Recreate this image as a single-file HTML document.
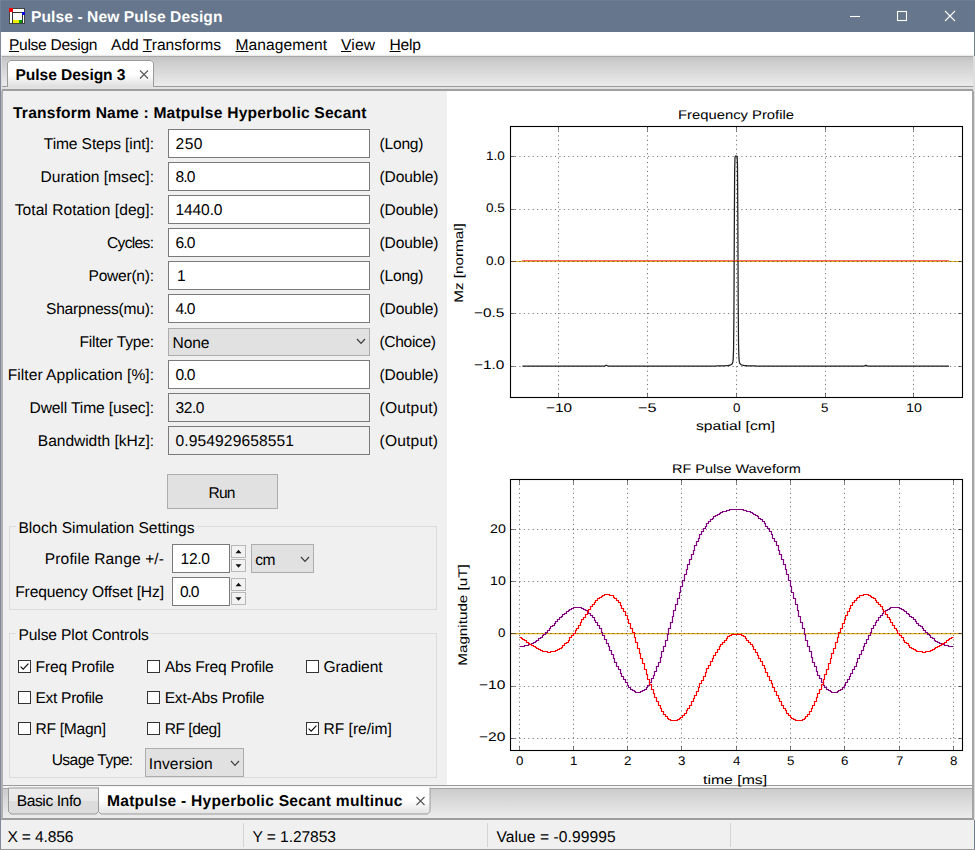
<!DOCTYPE html><html><head><meta charset="utf-8"><title>Pulse - New Pulse Design</title><style>
html,body{margin:0;padding:0;}
body{width:975px;height:850px;overflow:hidden;position:relative;background:#f0f0f0;font-family:'Liberation Sans',sans-serif;text-rendering:geometricPrecision;}
div,svg{position:absolute;box-sizing:border-box;}
.t{white-space:pre;line-height:20px;height:20px;}
.in{background:#fff;border:1px solid #7a7a7a;}
.ro{background:#f0f0f0;border:1px solid #7a7a7a;}
.btn{background:#e1e1e1;border:1px solid #adadad;}
.gb{border:1px solid #dcdcdc;}
.cb{width:13px;height:13px;background:#fff;border:1px solid #333;}
.sp{background:#f2f2f2;border:1px solid #b8b8b8;}
u{text-decoration:underline;text-underline-offset:1px;text-decoration-thickness:1px;}

</style></head><body>
<div style="left:0;top:0;width:975px;height:32px;background:#66768c;"></div>
<div style="left:0;top:0;width:975px;height:1px;background:#6e7e95;"></div>
<div style="left:0;top:0;width:1px;height:32px;background:#728299;"></div>
<svg style="left:9px;top:8px" width="16" height="16" viewBox="0 0 16 16" shape-rendering="crispEdges">
<rect x="0.5" y="0.5" width="15" height="15" fill="#fff" stroke="#444" stroke-width="1"/>
<path d="M3.5 4V16M3.5 4.5H16M13.5 7V16" stroke="#333" stroke-width="1" fill="none"/>
<rect x="0" y="0" width="4" height="4" fill="#f00000"/>
<rect x="13" y="4" width="3" height="3" fill="#0000e0"/>
<rect x="4" y="12.4" width="6" height="3" fill="#f0f000"/>
<rect x="10" y="12.4" width="3" height="3" fill="#00a000"/>
</svg>
<svg style="left:840px;top:0" width="135" height="32" viewBox="0 0 135 32"><g stroke="#fff" stroke-width="1.1" fill="none"><path d="M10 16.5H20"/><rect x="57.5" y="11.5" width="9" height="9"/><path d="M105 11L115 21M115 11L105 21"/></g></svg>
<div style="left:1px;top:32px;width:973px;height:24px;background:#fff;"></div>
<div style="left:1px;top:54px;width:973px;height:2px;background:linear-gradient(#fff,#e4e4e4);"></div>
<div style="left:0;top:32px;width:1px;height:818px;background:#7f8999;"></div>
<div style="left:974px;top:32px;width:1px;height:818px;background:#6f7c91;"></div>
<div style="left:1px;top:56px;width:973px;height:35px;background:#dcdcdc;"></div>
<div style="left:2px;top:56px;width:971px;height:31px;background:linear-gradient(#c2c2c2,#cdcdcd 20%,#ececec 100%);"></div>
<div style="left:2px;top:56px;width:971px;height:1px;background:#a8a8a8;"></div>
<div style="left:2px;top:86px;width:971px;height:1px;background:#9a9a9a;"></div>
<div style="left:2px;top:87px;width:971px;height:2px;background:#e2e2e2;"></div>
<div style="left:2px;top:89px;width:971px;height:2px;background:#9f9f9f;"></div>
<svg style="left:2px;top:58px" width="160" height="30" viewBox="0 0 160 30"><defs><linearGradient id="tg" x1="0" y1="0" x2="0" y2="1"><stop offset="0" stop-color="#fff"/><stop offset="0.55" stop-color="#fdfdfd"/><stop offset="1" stop-color="#dedede"/></linearGradient></defs><path d="M5.5 29V5L8 2.5H149L151.5 5V28.5H160" fill="none"/><path d="M5.5 29V5L8 2.5H149L151.5 5V29Z" fill="url(#tg)"/><path d="M0 28.5H5.5V5L8 2.5H149L151.5 5V28.5" fill="none" stroke="#9a9a9a" stroke-width="1"/><path d="M138 12.5L146 20.5M146 12.5L138 20.5" stroke="#555" stroke-width="1.1" fill="none"/></svg>
<div style="left:1px;top:91px;width:2px;height:728px;background:#b0b0b0;z-index:3;"></div>
<div style="left:972px;top:91px;width:2px;height:728px;background:#a4a4a4;z-index:3;"></div>
<div style="left:973.5px;top:56px;width:0.5px;height:764px;background:#ddd;"></div>
<div style="left:3px;top:91px;width:444px;height:695px;background:#f0f0f0;"></div>
<div class="in" style="left:168px;top:129px;width:202px;height:29px;"></div>
<div class="in" style="left:168px;top:162px;width:202px;height:29px;"></div>
<div class="in" style="left:168px;top:195px;width:202px;height:29px;"></div>
<div class="in" style="left:168px;top:228px;width:202px;height:29px;"></div>
<div class="in" style="left:168px;top:261px;width:202px;height:29px;"></div>
<div class="in" style="left:168px;top:294px;width:202px;height:29px;"></div>
<div class="btn" style="left:168px;top:328px;width:202px;height:28px;"></div>
<svg style="left:356px;top:338.3px" width="10" height="7" viewBox="0 0 10 7"><path d="M1 1L5 5.4L9 1" fill="none" stroke="#3a3a3a" stroke-width="1.15"/></svg>
<div class="in" style="left:168px;top:360px;width:202px;height:29px;"></div>
<div class="ro" style="left:168px;top:393px;width:202px;height:29px;"></div>
<div class="ro" style="left:168px;top:426px;width:202px;height:29px;"></div>
<div class="btn" style="left:167px;top:474px;width:111px;height:35px;"></div>
<div class="gb" style="left:9px;top:526px;width:428px;height:84px;"></div>
<div style="left:16px;top:520px;width:181px;height:14px;background:#f0f0f0;"></div>
<div class="gb" style="left:9px;top:633px;width:428px;height:145px;"></div>
<div style="left:16px;top:627px;width:135px;height:14px;background:#f0f0f0;"></div>
<div class="in" style="left:172px;top:544px;width:58px;height:29px;"></div>
<div class="sp" style="left:231px;top:545px;width:15px;height:13px;"></div><div class="sp" style="left:231px;top:559px;width:15px;height:13px;"></div><svg style="left:231px;top:545px" width="15" height="27" viewBox="0 0 15 27"><path d="M4.5 8.2L7.5 4.8L10.5 8.2Z M4.5 19.3L7.5 22.7L10.5 19.3Z" fill="#111"/></svg>
<div class="btn" style="left:251px;top:544px;width:63px;height:29px;"></div>
<svg style="left:300px;top:555.6px" width="10" height="7" viewBox="0 0 10 7"><path d="M1 1L5 5.4L9 1" fill="none" stroke="#3a3a3a" stroke-width="1.15"/></svg>
<div class="in" style="left:172px;top:577px;width:58px;height:29px;"></div>
<div class="sp" style="left:231px;top:578px;width:15px;height:13px;"></div><div class="sp" style="left:231px;top:592px;width:15px;height:13px;"></div><svg style="left:231px;top:578px" width="15" height="27" viewBox="0 0 15 27"><path d="M4.5 8.2L7.5 4.8L10.5 8.2Z M4.5 19.3L7.5 22.7L10.5 19.3Z" fill="#111"/></svg>
<div class="cb" style="left:18px;top:660px;"></div><svg style="left:18px;top:660px" width="13" height="13" viewBox="0 0 13 13"><path d="M2.6 6.6L5.2 9.2L10.4 3.6" fill="none" stroke="#111" stroke-width="1.2"/></svg>
<div class="cb" style="left:147px;top:660px;"></div>
<div class="cb" style="left:306px;top:660px;"></div>
<div class="cb" style="left:18px;top:691px;"></div>
<div class="cb" style="left:147px;top:691px;"></div>
<div class="cb" style="left:18px;top:722px;"></div>
<div class="cb" style="left:147px;top:722px;"></div>
<div class="cb" style="left:306px;top:722px;"></div><svg style="left:306px;top:722px" width="13" height="13" viewBox="0 0 13 13"><path d="M2.6 6.6L5.2 9.2L10.4 3.6" fill="none" stroke="#111" stroke-width="1.2"/></svg>
<div class="btn" style="left:145px;top:748px;width:99px;height:29px;"></div>
<svg style="left:230px;top:759.5px" width="10" height="7" viewBox="0 0 10 7"><path d="M1 1L5 5.4L9 1" fill="none" stroke="#3a3a3a" stroke-width="1.15"/></svg>
<div style="left:447px;top:91px;width:525px;height:694px;background:#fff;"></div>
<svg style="left:0;top:0" width="975" height="850" viewBox="0 0 975 850">
<path d="M510.5 261.5H962.5" stroke="#e3aa1c" stroke-width="1.1" fill="none"/>
<path d="M558.5 126.5V397.5M647.5 126.5V397.5M736.5 126.5V397.5M825.5 126.5V397.5M913.5 126.5V397.5M510.5 156.5H962.5M510.5 209.5H962.5M510.5 261.5H962.5M510.5 313.5H962.5M510.5 366.5H962.5" stroke="#1a1a1a" stroke-width="0.62" stroke-dasharray="1.11 3.33" fill="none"/><path d="M558.5 397.5v-4.3M558.5 126.5v4.3M647.5 397.5v-4.3M647.5 126.5v4.3M736.5 397.5v-4.3M736.5 126.5v4.3M825.5 397.5v-4.3M825.5 126.5v4.3M913.5 397.5v-4.3M913.5 126.5v4.3M510.5 156.5h4.3M962.5 156.5h-4.3M510.5 209.5h4.3M962.5 209.5h-4.3M510.5 261.5h4.3M962.5 261.5h-4.3M510.5 313.5h4.3M962.5 313.5h-4.3M510.5 366.5h4.3M962.5 366.5h-4.3" stroke="#222" stroke-width="0.62" fill="none"/>
<path d="M522.38 366.10 L522.74 366.10 L523.10 366.10 L523.45 366.10 L523.81 366.10 L524.16 366.10 L524.52 366.10 L524.87 366.10 L525.23 366.10 L525.58 366.10 L525.94 366.10 L526.30 366.10 L526.65 366.10 L527.01 366.10 L527.36 366.10 L527.72 366.10 L528.07 366.10 L528.43 366.10 L528.78 366.10 L529.14 366.10 L529.49 366.10 L529.85 366.10 L530.21 366.10 L530.56 366.10 L530.92 366.10 L531.27 366.10 L531.63 366.10 L531.98 366.10 L532.34 366.10 L532.69 366.10 L533.05 366.10 L533.41 366.10 L533.76 366.10 L534.12 366.10 L534.47 366.10 L534.83 366.10 L535.18 366.10 L535.54 366.10 L535.89 366.10 L536.25 366.10 L536.61 366.10 L536.96 366.10 L537.32 366.10 L537.67 366.10 L538.03 366.10 L538.38 366.10 L538.74 366.10 L539.09 366.10 L539.45 366.10 L539.81 366.10 L540.16 366.10 L540.52 366.10 L540.87 366.10 L541.23 366.10 L541.58 366.10 L541.94 366.10 L542.29 366.10 L542.65 366.10 L543.00 366.10 L543.36 366.10 L543.72 366.10 L544.07 366.10 L544.43 366.10 L544.78 366.10 L545.14 366.10 L545.49 366.10 L545.85 366.10 L546.20 366.10 L546.56 366.10 L546.92 366.10 L547.27 366.10 L547.63 366.10 L547.98 366.10 L548.34 366.10 L548.69 366.10 L549.05 366.10 L549.40 366.10 L549.76 366.10 L550.12 366.10 L550.47 366.10 L550.83 366.10 L551.18 366.10 L551.54 366.10 L551.89 366.10 L552.25 366.10 L552.60 366.10 L552.96 366.10 L553.32 366.10 L553.67 366.10 L554.03 366.10 L554.38 366.10 L554.74 366.10 L555.09 366.10 L555.45 366.10 L555.80 366.10 L556.16 366.10 L556.51 366.10 L556.87 366.10 L557.23 366.10 L557.58 366.10 L557.94 366.10 L558.29 366.10 L558.65 366.10 L559.00 366.10 L559.36 366.10 L559.71 366.10 L560.07 366.10 L560.43 366.10 L560.78 366.10 L561.14 366.10 L561.49 366.10 L561.85 366.10 L562.20 366.10 L562.56 366.10 L562.91 366.10 L563.27 366.10 L563.63 366.10 L563.98 366.10 L564.34 366.10 L564.69 366.10 L565.05 366.10 L565.40 366.10 L565.76 366.10 L566.11 366.10 L566.47 366.10 L566.83 366.10 L567.18 366.10 L567.54 366.10 L567.89 366.10 L568.25 366.10 L568.60 366.10 L568.96 366.10 L569.31 366.10 L569.67 366.10 L570.02 366.10 L570.38 366.10 L570.74 366.10 L571.09 366.10 L571.45 366.10 L571.80 366.10 L572.16 366.10 L572.51 366.10 L572.87 366.10 L573.22 366.10 L573.58 366.10 L573.94 366.10 L574.29 366.10 L574.65 366.10 L575.00 366.10 L575.36 366.10 L575.71 366.10 L576.07 366.10 L576.42 366.10 L576.78 366.10 L577.14 366.10 L577.49 366.10 L577.85 366.10 L578.20 366.10 L578.56 366.10 L578.91 366.10 L579.27 366.10 L579.62 366.10 L579.98 366.10 L580.34 366.10 L580.69 366.10 L581.05 366.10 L581.40 366.10 L581.76 366.10 L582.11 366.10 L582.47 366.10 L582.82 366.10 L583.18 366.10 L583.53 366.10 L583.89 366.10 L584.25 366.10 L584.60 366.10 L584.96 366.10 L585.31 366.10 L585.67 366.10 L586.02 366.10 L586.38 366.10 L586.73 366.10 L587.09 366.10 L587.45 366.10 L587.80 366.10 L588.16 366.10 L588.51 366.10 L588.87 366.10 L589.22 366.10 L589.58 366.10 L589.93 366.10 L590.29 366.10 L590.65 366.10 L591.00 366.10 L591.36 366.10 L591.71 366.10 L592.07 366.10 L592.42 366.10 L592.78 366.10 L593.13 366.10 L593.49 366.10 L593.85 366.10 L594.20 366.10 L594.56 366.10 L594.91 366.10 L595.27 366.10 L595.62 366.10 L595.98 366.10 L596.33 366.10 L596.69 366.10 L597.04 366.10 L597.40 366.10 L597.76 366.10 L598.11 366.10 L598.47 366.10 L598.82 366.10 L599.18 366.10 L599.53 366.10 L599.89 366.10 L600.24 366.10 L600.60 366.10 L600.96 366.10 L601.31 366.10 L601.67 366.10 L602.02 366.10 L602.38 366.10 L602.73 366.10 L603.09 366.10 L603.44 366.10 L603.80 366.09 L604.16 366.08 L604.51 366.05 L604.87 365.96 L605.22 365.80 L605.58 365.57 L605.93 365.35 L606.29 365.26 L606.64 365.34 L607.00 365.55 L607.36 365.78 L607.71 365.95 L608.07 366.04 L608.42 366.08 L608.78 366.09 L609.13 366.10 L609.49 366.10 L609.84 366.10 L610.20 366.10 L610.55 366.10 L610.91 366.10 L611.27 366.10 L611.62 366.10 L611.98 366.10 L612.33 366.10 L612.69 366.10 L613.04 366.10 L613.40 366.10 L613.75 366.10 L614.11 366.10 L614.47 366.10 L614.82 366.10 L615.18 366.10 L615.53 366.10 L615.89 366.10 L616.24 366.10 L616.60 366.10 L616.95 366.10 L617.31 366.10 L617.67 366.10 L618.02 366.10 L618.38 366.10 L618.73 366.10 L619.09 366.10 L619.44 366.10 L619.80 366.10 L620.15 366.10 L620.51 366.10 L620.87 366.10 L621.22 366.10 L621.58 366.10 L621.93 366.10 L622.29 366.10 L622.64 366.10 L623.00 366.10 L623.35 366.10 L623.71 366.10 L624.06 366.10 L624.42 366.10 L624.78 366.10 L625.13 366.10 L625.49 366.10 L625.84 366.10 L626.20 366.10 L626.55 366.10 L626.91 366.10 L627.26 366.10 L627.62 366.10 L627.98 366.10 L628.33 366.10 L628.69 366.10 L629.04 366.10 L629.40 366.10 L629.75 366.10 L630.11 366.10 L630.46 366.10 L630.82 366.10 L631.18 366.10 L631.53 366.10 L631.89 366.10 L632.24 366.10 L632.60 366.10 L632.95 366.10 L633.31 366.10 L633.66 366.10 L634.02 366.10 L634.38 366.10 L634.73 366.10 L635.09 366.10 L635.44 366.10 L635.80 366.10 L636.15 366.10 L636.51 366.10 L636.86 366.10 L637.22 366.10 L637.57 366.10 L637.93 366.10 L638.29 366.10 L638.64 366.10 L639.00 366.10 L639.35 366.10 L639.71 366.10 L640.06 366.10 L640.42 366.10 L640.77 366.10 L641.13 366.10 L641.49 366.10 L641.84 366.10 L642.20 366.10 L642.55 366.10 L642.91 366.10 L643.26 366.10 L643.62 366.10 L643.97 366.10 L644.33 366.10 L644.69 366.10 L645.04 366.09 L645.40 366.09 L645.75 366.09 L646.11 366.09 L646.46 366.09 L646.82 366.09 L647.17 366.09 L647.53 366.09 L647.89 366.09 L648.24 366.09 L648.60 366.09 L648.95 366.09 L649.31 366.09 L649.66 366.09 L650.02 366.09 L650.37 366.09 L650.73 366.09 L651.08 366.09 L651.44 366.09 L651.80 366.09 L652.15 366.09 L652.51 366.09 L652.86 366.09 L653.22 366.09 L653.57 366.09 L653.93 366.09 L654.28 366.09 L654.64 366.09 L655.00 366.09 L655.35 366.09 L655.71 366.09 L656.06 366.09 L656.42 366.09 L656.77 366.09 L657.13 366.09 L657.48 366.09 L657.84 366.09 L658.20 366.09 L658.55 366.09 L658.91 366.09 L659.26 366.09 L659.62 366.09 L659.97 366.09 L660.33 366.09 L660.68 366.09 L661.04 366.09 L661.40 366.09 L661.75 366.09 L662.11 366.09 L662.46 366.09 L662.82 366.09 L663.17 366.09 L663.53 366.09 L663.88 366.09 L664.24 366.09 L664.59 366.09 L664.95 366.09 L665.31 366.09 L665.66 366.09 L666.02 366.09 L666.37 366.09 L666.73 366.09 L667.08 366.09 L667.44 366.09 L667.79 366.09 L668.15 366.09 L668.51 366.09 L668.86 366.09 L669.22 366.09 L669.57 366.09 L669.93 366.09 L670.28 366.09 L670.64 366.09 L670.99 366.09 L671.35 366.09 L671.71 366.09 L672.06 366.09 L672.42 366.09 L672.77 366.09 L673.13 366.09 L673.48 366.09 L673.84 366.09 L674.19 366.09 L674.55 366.09 L674.91 366.09 L675.26 366.09 L675.62 366.09 L675.97 366.09 L676.33 366.09 L676.68 366.09 L677.04 366.09 L677.39 366.09 L677.75 366.09 L678.10 366.09 L678.46 366.09 L678.82 366.09 L679.17 366.09 L679.53 366.09 L679.88 366.09 L680.24 366.09 L680.59 366.09 L680.95 366.09 L681.30 366.09 L681.66 366.09 L682.02 366.09 L682.37 366.09 L682.73 366.09 L683.08 366.09 L683.44 366.09 L683.79 366.08 L684.15 366.08 L684.50 366.08 L684.86 366.08 L685.22 366.08 L685.57 366.08 L685.93 366.08 L686.28 366.08 L686.64 366.08 L686.99 366.08 L687.35 366.08 L687.70 366.08 L688.06 366.08 L688.42 366.08 L688.77 366.08 L689.13 366.08 L689.48 366.08 L689.84 366.08 L690.19 366.08 L690.55 366.08 L690.90 366.08 L691.26 366.08 L691.61 366.08 L691.97 366.08 L692.33 366.08 L692.68 366.08 L693.04 366.08 L693.39 366.08 L693.75 366.08 L694.10 366.08 L694.46 366.08 L694.81 366.08 L695.17 366.08 L695.53 366.07 L695.88 366.07 L696.24 366.07 L696.59 366.07 L696.95 366.07 L697.30 366.07 L697.66 366.07 L698.01 366.07 L698.37 366.07 L698.73 366.07 L699.08 366.07 L699.44 366.07 L699.79 366.07 L700.15 366.07 L700.50 366.07 L700.86 366.07 L701.21 366.07 L701.57 366.07 L701.92 366.06 L702.28 366.06 L702.64 366.06 L702.99 366.06 L703.35 366.06 L703.70 366.06 L704.06 366.06 L704.41 366.06 L704.77 366.06 L705.12 366.06 L705.48 366.06 L705.84 366.05 L706.19 366.05 L706.55 366.05 L706.90 366.05 L707.26 366.05 L707.61 366.05 L707.97 366.05 L708.32 366.05 L708.68 366.05 L709.04 366.04 L709.39 366.04 L709.75 366.04 L710.10 366.04 L710.46 366.04 L710.81 366.04 L711.17 366.03 L711.52 366.03 L711.88 366.03 L712.24 366.03 L712.59 366.03 L712.95 366.02 L713.30 366.02 L713.66 366.02 L714.01 366.02 L714.37 366.01 L714.72 366.01 L715.08 366.01 L715.43 366.00 L715.79 366.00 L716.15 366.00 L716.50 365.99 L716.86 365.99 L717.21 365.98 L717.57 365.98 L717.92 365.98 L718.28 365.97 L718.63 365.97 L718.99 365.96 L719.35 365.95 L719.70 365.95 L720.06 365.94 L720.41 365.93 L720.77 365.93 L721.12 365.92 L721.48 365.91 L721.83 365.90 L722.19 365.89 L722.55 365.88 L722.90 365.87 L723.26 365.85 L723.61 365.84 L723.97 365.83 L724.32 365.81 L724.68 365.79 L725.03 365.77 L725.39 365.75 L725.75 365.73 L726.10 365.70 L726.46 365.67 L726.81 365.64 L727.17 365.60 L727.52 365.56 L727.88 365.52 L728.23 365.47 L728.59 365.41 L728.94 365.34 L729.30 365.27 L729.66 365.18 L730.01 365.08 L730.37 364.96 L730.72 364.82 L731.08 364.65 L731.43 364.44 L731.79 364.16 L732.14 363.77 L732.50 363.14 L732.86 361.91 L733.21 358.85 L733.57 349.31 L733.92 316.74 L734.28 237.56 L734.63 171.91 L734.99 157.31 L735.34 156.13 L735.70 156.10 L736.06 156.10 L736.41 156.10 L736.77 156.11 L737.12 156.65 L737.48 165.12 L737.83 215.64 L738.19 301.23 L738.54 344.43 L738.90 357.41 L739.26 361.40 L739.61 362.91 L739.97 363.64 L740.32 364.07 L740.68 364.37 L741.03 364.60 L741.39 364.78 L741.74 364.93 L742.10 365.05 L742.45 365.16 L742.81 365.25 L743.17 365.33 L743.52 365.39 L743.88 365.45 L744.23 365.51 L744.59 365.55 L744.94 365.59 L745.30 365.63 L745.65 365.66 L746.01 365.69 L746.37 365.72 L746.72 365.74 L747.08 365.77 L747.43 365.79 L747.79 365.80 L748.14 365.82 L748.50 365.84 L748.85 365.85 L749.21 365.86 L749.57 365.88 L749.92 365.89 L750.28 365.90 L750.63 365.91 L750.99 365.92 L751.34 365.92 L751.70 365.93 L752.05 365.94 L752.41 365.95 L752.77 365.95 L753.12 365.96 L753.48 365.96 L753.83 365.97 L754.19 365.97 L754.54 365.98 L754.90 365.98 L755.25 365.99 L755.61 365.99 L755.96 366.00 L756.32 366.00 L756.68 366.00 L757.03 366.01 L757.39 366.01 L757.74 366.01 L758.10 366.01 L758.45 366.02 L758.81 366.02 L759.16 366.02 L759.52 366.02 L759.88 366.03 L760.23 366.03 L760.59 366.03 L760.94 366.03 L761.30 366.04 L761.65 366.04 L762.01 366.04 L762.36 366.04 L762.72 366.04 L763.08 366.04 L763.43 366.04 L763.79 366.05 L764.14 366.05 L764.50 366.05 L764.85 366.05 L765.21 366.05 L765.56 366.05 L765.92 366.05 L766.28 366.05 L766.63 366.06 L766.99 366.06 L767.34 366.06 L767.70 366.06 L768.05 366.06 L768.41 366.06 L768.76 366.06 L769.12 366.06 L769.47 366.06 L769.83 366.06 L770.19 366.06 L770.54 366.07 L770.90 366.07 L771.25 366.07 L771.61 366.07 L771.96 366.07 L772.32 366.07 L772.67 366.07 L773.03 366.07 L773.39 366.07 L773.74 366.07 L774.10 366.07 L774.45 366.07 L774.81 366.07 L775.16 366.07 L775.52 366.07 L775.87 366.07 L776.23 366.07 L776.59 366.07 L776.94 366.08 L777.30 366.08 L777.65 366.08 L778.01 366.08 L778.36 366.08 L778.72 366.08 L779.07 366.08 L779.43 366.08 L779.79 366.08 L780.14 366.08 L780.50 366.08 L780.85 366.08 L781.21 366.08 L781.56 366.08 L781.92 366.08 L782.27 366.08 L782.63 366.08 L782.98 366.08 L783.34 366.08 L783.70 366.08 L784.05 366.08 L784.41 366.08 L784.76 366.08 L785.12 366.08 L785.47 366.08 L785.83 366.08 L786.18 366.08 L786.54 366.08 L786.90 366.08 L787.25 366.08 L787.61 366.08 L787.96 366.08 L788.32 366.08 L788.67 366.09 L789.03 366.09 L789.38 366.09 L789.74 366.09 L790.10 366.09 L790.45 366.09 L790.81 366.09 L791.16 366.09 L791.52 366.09 L791.87 366.09 L792.23 366.09 L792.58 366.09 L792.94 366.09 L793.30 366.09 L793.65 366.09 L794.01 366.09 L794.36 366.09 L794.72 366.09 L795.07 366.09 L795.43 366.09 L795.78 366.09 L796.14 366.09 L796.49 366.09 L796.85 366.09 L797.21 366.09 L797.56 366.09 L797.92 366.09 L798.27 366.09 L798.63 366.09 L798.98 366.09 L799.34 366.09 L799.69 366.09 L800.05 366.09 L800.41 366.09 L800.76 366.09 L801.12 366.09 L801.47 366.09 L801.83 366.09 L802.18 366.09 L802.54 366.09 L802.89 366.09 L803.25 366.09 L803.61 366.09 L803.96 366.09 L804.32 366.09 L804.67 366.09 L805.03 366.09 L805.38 366.09 L805.74 366.09 L806.09 366.09 L806.45 366.09 L806.81 366.09 L807.16 366.09 L807.52 366.09 L807.87 366.09 L808.23 366.09 L808.58 366.09 L808.94 366.09 L809.29 366.09 L809.65 366.09 L810.00 366.09 L810.36 366.09 L810.72 366.09 L811.07 366.09 L811.43 366.09 L811.78 366.09 L812.14 366.09 L812.49 366.09 L812.85 366.09 L813.20 366.09 L813.56 366.09 L813.92 366.09 L814.27 366.09 L814.63 366.09 L814.98 366.09 L815.34 366.09 L815.69 366.09 L816.05 366.09 L816.40 366.09 L816.76 366.09 L817.12 366.09 L817.47 366.09 L817.83 366.09 L818.18 366.09 L818.54 366.09 L818.89 366.09 L819.25 366.09 L819.60 366.09 L819.96 366.09 L820.32 366.09 L820.67 366.09 L821.03 366.09 L821.38 366.09 L821.74 366.09 L822.09 366.09 L822.45 366.09 L822.80 366.09 L823.16 366.09 L823.51 366.09 L823.87 366.09 L824.23 366.09 L824.58 366.09 L824.94 366.09 L825.29 366.09 L825.65 366.09 L826.00 366.09 L826.36 366.09 L826.71 366.09 L827.07 366.09 L827.43 366.10 L827.78 366.10 L828.14 366.10 L828.49 366.10 L828.85 366.10 L829.20 366.10 L829.56 366.10 L829.91 366.10 L830.27 366.10 L830.63 366.10 L830.98 366.10 L831.34 366.10 L831.69 366.10 L832.05 366.10 L832.40 366.10 L832.76 366.10 L833.11 366.10 L833.47 366.10 L833.83 366.10 L834.18 366.10 L834.54 366.10 L834.89 366.10 L835.25 366.10 L835.60 366.10 L835.96 366.10 L836.31 366.10 L836.67 366.10 L837.02 366.10 L837.38 366.10 L837.74 366.10 L838.09 366.10 L838.45 366.10 L838.80 366.10 L839.16 366.10 L839.51 366.10 L839.87 366.10 L840.22 366.10 L840.58 366.10 L840.94 366.10 L841.29 366.10 L841.65 366.10 L842.00 366.10 L842.36 366.10 L842.71 366.10 L843.07 366.10 L843.42 366.10 L843.78 366.10 L844.14 366.10 L844.49 366.10 L844.85 366.10 L845.20 366.10 L845.56 366.10 L845.91 366.10 L846.27 366.10 L846.62 366.10 L846.98 366.10 L847.34 366.10 L847.69 366.10 L848.05 366.10 L848.40 366.10 L848.76 366.10 L849.11 366.10 L849.47 366.10 L849.82 366.10 L850.18 366.10 L850.53 366.10 L850.89 366.10 L851.25 366.10 L851.60 366.10 L851.96 366.10 L852.31 366.10 L852.67 366.10 L853.02 366.10 L853.38 366.10 L853.73 366.10 L854.09 366.10 L854.45 366.10 L854.80 366.10 L855.16 366.10 L855.51 366.10 L855.87 366.10 L856.22 366.10 L856.58 366.10 L856.93 366.10 L857.29 366.10 L857.65 366.10 L858.00 366.10 L858.36 366.10 L858.71 366.10 L859.07 366.10 L859.42 366.10 L859.78 366.10 L860.13 366.10 L860.49 366.10 L860.85 366.10 L861.20 366.10 L861.56 366.10 L861.91 366.10 L862.27 366.10 L862.62 366.10 L862.98 366.10 L863.33 366.09 L863.69 366.09 L864.04 366.06 L864.40 365.98 L864.76 365.83 L865.11 365.61 L865.47 365.38 L865.82 365.26 L866.18 365.32 L866.53 365.51 L866.89 365.75 L867.24 365.93 L867.60 366.03 L867.96 366.08 L868.31 366.09 L868.67 366.10 L869.02 366.10 L869.38 366.10 L869.73 366.10 L870.09 366.10 L870.44 366.10 L870.80 366.10 L871.16 366.10 L871.51 366.10 L871.87 366.10 L872.22 366.10 L872.58 366.10 L872.93 366.10 L873.29 366.10 L873.64 366.10 L874.00 366.10 L874.36 366.10 L874.71 366.10 L875.07 366.10 L875.42 366.10 L875.78 366.10 L876.13 366.10 L876.49 366.10 L876.84 366.10 L877.20 366.10 L877.55 366.10 L877.91 366.10 L878.27 366.10 L878.62 366.10 L878.98 366.10 L879.33 366.10 L879.69 366.10 L880.04 366.10 L880.40 366.10 L880.75 366.10 L881.11 366.10 L881.47 366.10 L881.82 366.10 L882.18 366.10 L882.53 366.10 L882.89 366.10 L883.24 366.10 L883.60 366.10 L883.95 366.10 L884.31 366.10 L884.67 366.10 L885.02 366.10 L885.38 366.10 L885.73 366.10 L886.09 366.10 L886.44 366.10 L886.80 366.10 L887.15 366.10 L887.51 366.10 L887.87 366.10 L888.22 366.10 L888.58 366.10 L888.93 366.10 L889.29 366.10 L889.64 366.10 L890.00 366.10 L890.35 366.10 L890.71 366.10 L891.06 366.10 L891.42 366.10 L891.78 366.10 L892.13 366.10 L892.49 366.10 L892.84 366.10 L893.20 366.10 L893.55 366.10 L893.91 366.10 L894.26 366.10 L894.62 366.10 L894.98 366.10 L895.33 366.10 L895.69 366.10 L896.04 366.10 L896.40 366.10 L896.75 366.10 L897.11 366.10 L897.46 366.10 L897.82 366.10 L898.18 366.10 L898.53 366.10 L898.89 366.10 L899.24 366.10 L899.60 366.10 L899.95 366.10 L900.31 366.10 L900.66 366.10 L901.02 366.10 L901.38 366.10 L901.73 366.10 L902.09 366.10 L902.44 366.10 L902.80 366.10 L903.15 366.10 L903.51 366.10 L903.86 366.10 L904.22 366.10 L904.57 366.10 L904.93 366.10 L905.29 366.10 L905.64 366.10 L906.00 366.10 L906.35 366.10 L906.71 366.10 L907.06 366.10 L907.42 366.10 L907.77 366.10 L908.13 366.10 L908.49 366.10 L908.84 366.10 L909.20 366.10 L909.55 366.10 L909.91 366.10 L910.26 366.10 L910.62 366.10 L910.97 366.10 L911.33 366.10 L911.69 366.10 L912.04 366.10 L912.40 366.10 L912.75 366.10 L913.11 366.10 L913.46 366.10 L913.82 366.10 L914.17 366.10 L914.53 366.10 L914.89 366.10 L915.24 366.10 L915.60 366.10 L915.95 366.10 L916.31 366.10 L916.66 366.10 L917.02 366.10 L917.37 366.10 L917.73 366.10 L918.08 366.10 L918.44 366.10 L918.80 366.10 L919.15 366.10 L919.51 366.10 L919.86 366.10 L920.22 366.10 L920.57 366.10 L920.93 366.10 L921.28 366.10 L921.64 366.10 L922.00 366.10 L922.35 366.10 L922.71 366.10 L923.06 366.10 L923.42 366.10 L923.77 366.10 L924.13 366.10 L924.48 366.10 L924.84 366.10 L925.20 366.10 L925.55 366.10 L925.91 366.10 L926.26 366.10 L926.62 366.10 L926.97 366.10 L927.33 366.10 L927.68 366.10 L928.04 366.10 L928.39 366.10 L928.75 366.10 L929.11 366.10 L929.46 366.10 L929.82 366.10 L930.17 366.10 L930.53 366.10 L930.88 366.10 L931.24 366.10 L931.59 366.10 L931.95 366.10 L932.31 366.10 L932.66 366.10 L933.02 366.10 L933.37 366.10 L933.73 366.10 L934.08 366.10 L934.44 366.10 L934.79 366.10 L935.15 366.10 L935.51 366.10 L935.86 366.10 L936.22 366.10 L936.57 366.10 L936.93 366.10 L937.28 366.10 L937.64 366.10 L937.99 366.10 L938.35 366.10 L938.71 366.10 L939.06 366.10 L939.42 366.10 L939.77 366.10 L940.13 366.10 L940.48 366.10 L940.84 366.10 L941.19 366.10 L941.55 366.10 L941.90 366.10 L942.26 366.10 L942.62 366.10 L942.97 366.10 L943.33 366.10 L943.68 366.10 L944.04 366.10 L944.39 366.10 L944.75 366.10 L945.10 366.10 L945.46 366.10 L945.82 366.10 L946.17 366.10 L946.53 366.10 L946.88 366.10 L947.24 366.10 L947.59 366.10 L947.95 366.10 L948.30 366.10 L948.66 366.10 L949.02 366.10" stroke="#1e1e1e" stroke-width="1.25" fill="none" stroke-linejoin="round"/>
<path d="M522.1 260.5H949.15" stroke="#ff3030" stroke-width="1" stroke-opacity="0.72" fill="none"/>
<rect x="510.5" y="126.5" width="452.0" height="271.0" fill="none" stroke="#000" stroke-width="1.1"/>
<path d="M510.5 633.6H962.5" stroke="#e3aa1c" stroke-width="1.1" fill="none"/>
<path d="M519.5 479.5V750.5M573.5 479.5V750.5M627.5 479.5V750.5M681.5 479.5V750.5M736.5 479.5V750.5M790.5 479.5V750.5M844.5 479.5V750.5M899.5 479.5V750.5M953.5 479.5V750.5M510.5 529.5H962.5M510.5 581.5H962.5M510.5 633.5H962.5M510.5 686.5H962.5M510.5 738.5H962.5" stroke="#1a1a1a" stroke-width="0.62" stroke-dasharray="1.11 3.33" fill="none"/><path d="M519.5 750.5v-4.3M519.5 479.5v4.3M573.5 750.5v-4.3M573.5 479.5v4.3M627.5 750.5v-4.3M627.5 479.5v4.3M681.5 750.5v-4.3M681.5 479.5v4.3M736.5 750.5v-4.3M736.5 479.5v4.3M790.5 750.5v-4.3M790.5 479.5v4.3M844.5 750.5v-4.3M844.5 479.5v4.3M899.5 750.5v-4.3M899.5 479.5v4.3M953.5 750.5v-4.3M953.5 479.5v4.3M510.5 529.5h4.3M962.5 529.5h-4.3M510.5 581.5h4.3M962.5 581.5h-4.3M510.5 633.5h4.3M962.5 633.5h-4.3M510.5 686.5h4.3M962.5 686.5h-4.3M510.5 738.5h4.3M962.5 738.5h-4.3" stroke="#222" stroke-width="0.62" fill="none"/>
<path d="M519.5 646.5H521.5V646.5H522.5V646.5H524.5V645.5H526.5V645.5H528.5V644.5H529.5V644.5H531.5V643.5H533.5V642.5H535.5V641.5H536.5V640.5H538.5V638.5H540.5V637.5H542.5V635.5H543.5V634.5H545.5V632.5H547.5V630.5H549.5V628.5H550.5V626.5H552.5V625.5H554.5V623.5H555.5V621.5H557.5V619.5H559.5V617.5H561.5V616.5H562.5V614.5H564.5V613.5H566.5V611.5H568.5V610.5H569.5V609.5H571.5V608.5H573.5V607.5H575.5V607.5H576.5V607.5H578.5V607.5H580.5V607.5H581.5V608.5H583.5V609.5H585.5V610.5H587.5V611.5H588.5V613.5H590.5V615.5H592.5V617.5H594.5V620.5H595.5V622.5H597.5V625.5H599.5V628.5H601.5V632.5H602.5V635.5H604.5V639.5H606.5V643.5H608.5V646.5H609.5V650.5H611.5V654.5H613.5V658.5H614.5V662.5H616.5V666.5H618.5V669.5H620.5V673.5H621.5V676.5H623.5V679.5H625.5V682.5H627.5V685.5H628.5V687.5H630.5V689.5H632.5V690.5H634.5V691.5H635.5V692.5H637.5V692.5H639.5V692.5H640.5V691.5H642.5V690.5H644.5V689.5H646.5V687.5H647.5V685.5H649.5V682.5H651.5V678.5H653.5V675.5H654.5V671.5H656.5V666.5H658.5V662.5H660.5V657.5H661.5V651.5H663.5V646.5H665.5V640.5H667.5V634.5H668.5V628.5H670.5V622.5H672.5V616.5H673.5V610.5H675.5V604.5H677.5V598.5H679.5V592.5H680.5V586.5H682.5V580.5H684.5V574.5H686.5V569.5H687.5V564.5H689.5V559.5H691.5V554.5H693.5V550.5H694.5V545.5H696.5V541.5H698.5V538.5H699.5V534.5H701.5V531.5H703.5V528.5H705.5V526.5H706.5V523.5H708.5V521.5H710.5V519.5H712.5V518.5H713.5V516.5H715.5V515.5H717.5V514.5H719.5V513.5H720.5V512.5H722.5V511.5H724.5V511.5H726.5V510.5H727.5V510.5H729.5V509.5H731.5V509.5H732.5V509.5H734.5V509.5H736.5V509.5H738.5V509.5H739.5V509.5H741.5V509.5H743.5V510.5H745.5V510.5H746.5V511.5H748.5V511.5H750.5V512.5H752.5V513.5H753.5V514.5H755.5V515.5H757.5V516.5H758.5V518.5H760.5V519.5H762.5V521.5H764.5V523.5H765.5V526.5H767.5V528.5H769.5V531.5H771.5V534.5H772.5V538.5H774.5V541.5H776.5V545.5H778.5V550.5H779.5V554.5H781.5V559.5H783.5V564.5H785.5V569.5H786.5V574.5H788.5V580.5H790.5V586.5H791.5V592.5H793.5V598.5H795.5V604.5H797.5V610.5H798.5V616.5H800.5V622.5H802.5V628.5H804.5V634.5H805.5V640.5H807.5V646.5H809.5V651.5H811.5V657.5H812.5V662.5H814.5V666.5H816.5V671.5H817.5V675.5H819.5V678.5H821.5V682.5H823.5V685.5H824.5V687.5H826.5V689.5H828.5V690.5H830.5V691.5H831.5V692.5H833.5V692.5H835.5V692.5H837.5V691.5H838.5V690.5H840.5V689.5H842.5V687.5H844.5V685.5H845.5V682.5H847.5V679.5H849.5V676.5H850.5V673.5H852.5V669.5H854.5V666.5H856.5V662.5H857.5V658.5H859.5V654.5H861.5V650.5H863.5V646.5H864.5V643.5H866.5V639.5H868.5V635.5H870.5V632.5H871.5V628.5H873.5V625.5H875.5V622.5H876.5V620.5H878.5V617.5H880.5V615.5H882.5V613.5H883.5V611.5H885.5V610.5H887.5V609.5H889.5V608.5H890.5V607.5H892.5V607.5H894.5V607.5H896.5V607.5H897.5V607.5H899.5V608.5H901.5V609.5H903.5V610.5H904.5V611.5H906.5V613.5H908.5V614.5H909.5V616.5H911.5V617.5H913.5V619.5H915.5V621.5H916.5V623.5H918.5V625.5H920.5V626.5H922.5V628.5H923.5V630.5H925.5V632.5H927.5V634.5H929.5V635.5H930.5V637.5H932.5V638.5H934.5V640.5H935.5V641.5H937.5V642.5H939.5V643.5H941.5V644.5H942.5V644.5H944.5V645.5H946.5V645.5H948.5V646.5H949.5V646.5H951.5V646.5H953.5" stroke="#800080" stroke-width="1.2" fill="none" stroke-linejoin="miter"/>
<path d="M519.5 637.5H521.5V638.5H522.5V639.5H524.5V640.5H526.5V642.5H528.5V643.5H529.5V644.5H531.5V645.5H533.5V646.5H535.5V647.5H536.5V648.5H538.5V649.5H540.5V650.5H542.5V651.5H543.5V651.5H545.5V651.5H547.5V652.5H549.5V652.5H550.5V651.5H552.5V651.5H554.5V651.5H555.5V650.5H557.5V649.5H559.5V648.5H561.5V647.5H562.5V645.5H564.5V643.5H566.5V642.5H568.5V640.5H569.5V637.5H571.5V635.5H573.5V633.5H575.5V630.5H576.5V628.5H578.5V625.5H580.5V622.5H581.5V619.5H583.5V617.5H585.5V614.5H587.5V611.5H588.5V609.5H590.5V606.5H592.5V604.5H594.5V602.5H595.5V600.5H597.5V598.5H599.5V597.5H601.5V596.5H602.5V595.5H604.5V594.5H606.5V594.5H608.5V594.5H609.5V595.5H611.5V595.5H613.5V597.5H614.5V598.5H616.5V600.5H618.5V602.5H620.5V605.5H621.5V608.5H623.5V611.5H625.5V615.5H627.5V619.5H628.5V623.5H630.5V628.5H632.5V632.5H634.5V637.5H635.5V642.5H637.5V648.5H639.5V653.5H640.5V658.5H642.5V663.5H644.5V669.5H646.5V674.5H647.5V679.5H649.5V684.5H651.5V689.5H653.5V693.5H654.5V697.5H656.5V701.5H658.5V705.5H660.5V708.5H661.5V711.5H663.5V714.5H665.5V716.5H667.5V718.5H668.5V719.5H670.5V720.5H672.5V720.5H673.5V720.5H675.5V720.5H677.5V719.5H679.5V718.5H680.5V717.5H682.5V715.5H684.5V713.5H686.5V710.5H687.5V708.5H689.5V705.5H691.5V701.5H693.5V698.5H694.5V695.5H696.5V691.5H698.5V687.5H699.5V683.5H701.5V680.5H703.5V676.5H705.5V672.5H706.5V668.5H708.5V665.5H710.5V661.5H712.5V658.5H713.5V655.5H715.5V652.5H717.5V649.5H719.5V646.5H720.5V644.5H722.5V642.5H724.5V640.5H726.5V638.5H727.5V636.5H729.5V635.5H731.5V634.5H732.5V634.5H734.5V634.5H736.5V634.5H738.5V634.5H739.5V634.5H741.5V635.5H743.5V636.5H745.5V638.5H746.5V640.5H748.5V642.5H750.5V644.5H752.5V646.5H753.5V649.5H755.5V652.5H757.5V655.5H758.5V658.5H760.5V661.5H762.5V665.5H764.5V668.5H765.5V672.5H767.5V676.5H769.5V680.5H771.5V683.5H772.5V687.5H774.5V691.5H776.5V695.5H778.5V698.5H779.5V701.5H781.5V705.5H783.5V708.5H785.5V710.5H786.5V713.5H788.5V715.5H790.5V717.5H791.5V718.5H793.5V719.5H795.5V720.5H797.5V720.5H798.5V720.5H800.5V720.5H802.5V719.5H804.5V718.5H805.5V716.5H807.5V714.5H809.5V711.5H811.5V708.5H812.5V705.5H814.5V701.5H816.5V697.5H817.5V693.5H819.5V689.5H821.5V684.5H823.5V679.5H824.5V674.5H826.5V669.5H828.5V663.5H830.5V658.5H831.5V653.5H833.5V648.5H835.5V642.5H837.5V637.5H838.5V632.5H840.5V628.5H842.5V623.5H844.5V619.5H845.5V615.5H847.5V611.5H849.5V608.5H850.5V605.5H852.5V602.5H854.5V600.5H856.5V598.5H857.5V597.5H859.5V595.5H861.5V595.5H863.5V594.5H864.5V594.5H866.5V594.5H868.5V595.5H870.5V596.5H871.5V597.5H873.5V598.5H875.5V600.5H876.5V602.5H878.5V604.5H880.5V606.5H882.5V609.5H883.5V611.5H885.5V614.5H887.5V617.5H889.5V619.5H890.5V622.5H892.5V625.5H894.5V628.5H896.5V630.5H897.5V633.5H899.5V635.5H901.5V637.5H903.5V640.5H904.5V642.5H906.5V643.5H908.5V645.5H909.5V647.5H911.5V648.5H913.5V649.5H915.5V650.5H916.5V651.5H918.5V651.5H920.5V651.5H922.5V652.5H923.5V652.5H925.5V651.5H927.5V651.5H929.5V651.5H930.5V650.5H932.5V649.5H934.5V648.5H935.5V647.5H937.5V646.5H939.5V645.5H941.5V644.5H942.5V643.5H944.5V642.5H946.5V640.5H948.5V639.5H949.5V638.5H951.5V637.5H953.5" stroke="#ff0000" stroke-width="1.2" fill="none" stroke-linejoin="miter"/>
<rect x="510.5" y="479.5" width="452.0" height="271.0" fill="none" stroke="#000" stroke-width="1.1"/>
</svg>
<div style="left:1px;top:785px;width:973px;height:35px;background:#dcdcdc;"></div>
<div style="left:3px;top:785px;width:970px;height:1px;background:#9a9a9a;"></div>
<div style="left:3px;top:786px;width:970px;height:2px;background:#f4f4f4;"></div>
<div style="left:3px;top:788px;width:970px;height:30px;background:linear-gradient(#cbcbcb,#ececec);"></div>
<div style="left:3px;top:787.5px;width:970px;height:1px;background:#a4a4a4;"></div>
<div style="left:1px;top:818px;width:973px;height:2px;background:#9d9d9d;"></div>
<svg style="left:3px;top:787px" width="440" height="31" viewBox="0 0 440 31"><defs><linearGradient id="bg1" x1="0" y1="0" x2="0" y2="1"><stop offset="0" stop-color="#ececec"/><stop offset="0.5" stop-color="#e8e8e8"/><stop offset="0.5" stop-color="#dcdcdc"/><stop offset="1" stop-color="#dcdcdc"/></linearGradient><linearGradient id="bg2" x1="0" y1="0" x2="0" y2="1"><stop offset="0" stop-color="#fff"/><stop offset="0.5" stop-color="#fff"/><stop offset="1" stop-color="#e2e2e2"/></linearGradient></defs><path d="M5.5 1V24.5L8 27H93L95.5 24.5V1Z" fill="url(#bg1)" stroke="#9a9a9a"/><path d="M95.5 0V24.5L98 27H424.5L427 24.5V0Z" fill="url(#bg2)"/><path d="M95.5 0.5V24.5L98 27H424.5L427 24.5V0.5" fill="none" stroke="#9a9a9a"/><path d="M413.5 10L421.5 18M421.5 10L413.5 18" stroke="#555" stroke-width="1.1" fill="none"/></svg>
<div style="left:1px;top:820px;width:973px;height:29px;background:#f0f0f0;"></div>
<div style="left:243px;top:823px;width:1px;height:24px;background:#d4d4d4;"></div>
<div style="left:487px;top:823px;width:1px;height:24px;background:#d4d4d4;"></div>
<div style="left:730px;top:823px;width:1px;height:24px;background:#d4d4d4;"></div>
<div style="left:0px;top:848.5px;width:975px;height:1.5px;background:#9a9a9a;"></div>
<div id="texts" style="left:0;top:0;width:975px;height:850px;">
<div class="t" style="left:31.00px;top:8.00px;font-size:15.6px;color:#fff;font-weight:bold;letter-spacing:0.074px;">Pulse - New Pulse Design</div>
<div class="t" style="left:9.00px;top:36.00px;font-size:15.6px;color:#000;letter-spacing:-0.308px;"><u>P</u>ulse Design</div>
<div class="t" style="left:111.00px;top:36.00px;font-size:15.6px;color:#000;letter-spacing:-0.006px;">Add <u>T</u>ransforms</div>
<div class="t" style="left:235.50px;top:36.00px;font-size:15.6px;color:#000;letter-spacing:0.052px;"><u>M</u>anagement</div>
<div class="t" style="left:341.00px;top:36.00px;font-size:15.6px;color:#000;letter-spacing:0.156px;"><u>V</u>iew</div>
<div class="t" style="left:389.50px;top:36.00px;font-size:15.6px;color:#000;letter-spacing:-0.193px;"><u>H</u>elp</div>
<div class="t" style="left:15.50px;top:66.00px;font-size:15.6px;color:#000;font-weight:bold;letter-spacing:-0.072px;">Pulse Design 3</div>
<div class="t" style="left:13.00px;top:104.00px;font-size:15.6px;color:#000;font-weight:bold;letter-spacing:0.205px;">Transform Name : Matpulse Hyperbolic Secant</div>
<div class="t" style="left:43.80px;top:135.00px;font-size:15.6px;color:#000;letter-spacing:-0.118px;">Time Steps [int]:</div>
<div class="t" style="left:175.50px;top:135.00px;font-size:15.6px;color:#000;letter-spacing:0.484px;">250</div>
<div class="t" style="left:379.50px;top:135.00px;font-size:15.6px;color:#000;letter-spacing:-0.216px;">(Long)</div>
<div class="t" style="left:40.60px;top:168.00px;font-size:15.6px;color:#000;letter-spacing:-0.009px;">Duration [msec]:</div>
<div class="t" style="left:175.50px;top:168.00px;font-size:15.6px;color:#000;letter-spacing:-0.844px;">8.0</div>
<div class="t" style="left:379.50px;top:168.00px;font-size:15.6px;color:#000;letter-spacing:-0.116px;">(Double)</div>
<div class="t" style="left:14.80px;top:201.00px;font-size:15.6px;color:#000;letter-spacing:0.025px;">Total Rotation [deg]:</div>
<div class="t" style="left:175.50px;top:201.00px;font-size:15.6px;color:#000;letter-spacing:-0.141px;">1440.0</div>
<div class="t" style="left:379.50px;top:201.00px;font-size:15.6px;color:#000;letter-spacing:-0.116px;">(Double)</div>
<div class="t" style="left:107.00px;top:234.00px;font-size:15.6px;color:#000;letter-spacing:-0.688px;">Cycles:</div>
<div class="t" style="left:175.50px;top:234.00px;font-size:15.6px;color:#000;letter-spacing:-0.844px;">6.0</div>
<div class="t" style="left:379.50px;top:234.00px;font-size:15.6px;color:#000;letter-spacing:-0.116px;">(Double)</div>
<div class="t" style="left:88.60px;top:267.00px;font-size:15.6px;color:#000;letter-spacing:-0.274px;">Power(n):</div>
<div class="t" style="left:177.00px;top:267.00px;font-size:15.6px;color:#000;letter-spacing:0.000px;">1</div>
<div class="t" style="left:379.50px;top:267.00px;font-size:15.6px;color:#000;letter-spacing:-0.216px;">(Long)</div>
<div class="t" style="left:46.00px;top:300.00px;font-size:15.6px;color:#000;letter-spacing:-0.226px;">Sharpness(mu):</div>
<div class="t" style="left:175.50px;top:300.00px;font-size:15.6px;color:#000;letter-spacing:-0.844px;">4.0</div>
<div class="t" style="left:379.50px;top:300.00px;font-size:15.6px;color:#000;letter-spacing:-0.116px;">(Double)</div>
<div class="t" style="left:79.40px;top:333.00px;font-size:15.6px;color:#000;letter-spacing:-0.204px;">Filter Type:</div>
<div class="t" style="left:379.50px;top:333.00px;font-size:15.6px;color:#000;letter-spacing:-0.348px;">(Choice)</div>
<div class="t" style="left:7.80px;top:366.00px;font-size:15.6px;color:#000;letter-spacing:0.027px;">Filter Application [%]:</div>
<div class="t" style="left:175.50px;top:366.00px;font-size:15.6px;color:#000;letter-spacing:-0.844px;">0.0</div>
<div class="t" style="left:379.50px;top:366.00px;font-size:15.6px;color:#000;letter-spacing:-0.116px;">(Double)</div>
<div class="t" style="left:29.50px;top:399.00px;font-size:15.6px;color:#000;letter-spacing:-0.119px;">Dwell Time [usec]:</div>
<div class="t" style="left:175.50px;top:399.00px;font-size:15.6px;color:#000;letter-spacing:-0.453px;">32.0</div>
<div class="t" style="left:379.50px;top:399.00px;font-size:15.6px;color:#000;letter-spacing:0.185px;">(Output)</div>
<div class="t" style="left:37.80px;top:432.00px;font-size:15.6px;color:#000;letter-spacing:-0.054px;">Bandwidth [kHz]:</div>
<div class="t" style="left:175.50px;top:432.00px;font-size:15.6px;color:#000;letter-spacing:0.109px;">0.954929658551</div>
<div class="t" style="left:379.50px;top:432.00px;font-size:15.6px;color:#000;letter-spacing:0.185px;">(Output)</div>
<div class="t" style="left:172.50px;top:334.00px;font-size:15.6px;color:#000;letter-spacing:-0.094px;">None</div>
<div class="t" style="left:208.50px;top:484.00px;font-size:15.6px;color:#000;letter-spacing:-0.805px;">Run</div>
<div class="t" style="left:18.50px;top:519.00px;font-size:15.6px;color:#000;letter-spacing:-0.035px;">Bloch Simulation Settings</div>
<div class="t" style="left:44.80px;top:550.00px;font-size:15.6px;color:#000;letter-spacing:0.109px;">Profile Range +/-</div>
<div class="t" style="left:15.20px;top:583.00px;font-size:15.6px;color:#000;letter-spacing:-0.130px;">Frequency Offset [Hz]</div>
<div class="t" style="left:180.50px;top:550.00px;font-size:15.6px;color:#000;letter-spacing:-0.286px;">12.0</div>
<div class="t" style="left:180.00px;top:583.00px;font-size:15.6px;color:#000;letter-spacing:-1.094px;">0.0</div>
<div class="t" style="left:255.20px;top:551.00px;font-size:15.6px;color:#000;letter-spacing:-0.397px;">cm</div>
<div class="t" style="left:18.50px;top:626.00px;font-size:15.6px;color:#000;letter-spacing:-0.128px;">Pulse Plot Controls</div>
<div class="t" style="left:35.50px;top:658.00px;font-size:15.6px;color:#000;letter-spacing:-0.146px;">Freq Profile</div>
<div class="t" style="left:164.70px;top:658.00px;font-size:15.6px;color:#000;letter-spacing:-0.188px;">Abs Freq Profile</div>
<div class="t" style="left:323.50px;top:658.00px;font-size:15.6px;color:#000;letter-spacing:-0.102px;">Gradient</div>
<div class="t" style="left:35.50px;top:689.00px;font-size:15.6px;color:#000;letter-spacing:-0.318px;">Ext Profile</div>
<div class="t" style="left:164.70px;top:689.00px;font-size:15.6px;color:#000;letter-spacing:-0.246px;">Ext-Abs Profile</div>
<div class="t" style="left:35.50px;top:720.00px;font-size:15.6px;color:#000;letter-spacing:-0.275px;">RF [Magn]</div>
<div class="t" style="left:164.70px;top:720.00px;font-size:15.6px;color:#000;letter-spacing:-0.502px;">RF [deg]</div>
<div class="t" style="left:323.50px;top:720.00px;font-size:15.6px;color:#000;letter-spacing:-0.015px;">RF [re/im]</div>
<div class="t" style="left:51.70px;top:751.00px;font-size:15.6px;color:#000;letter-spacing:-0.577px;">Usage Type:</div>
<div class="t" style="left:148.80px;top:755.00px;font-size:15.6px;color:#000;letter-spacing:0.090px;">Inversion</div>
<div class="t" style="left:16.70px;top:792.00px;font-size:15.6px;color:#000;letter-spacing:-0.409px;">Basic Info</div>
<div class="t" style="left:107.00px;top:792.00px;font-size:15.6px;color:#000;font-weight:bold;letter-spacing:0.241px;">Matpulse - Hyperbolic Secant multinuc</div>
<div class="t" style="left:7.40px;top:828.00px;font-size:15.6px;color:#000;letter-spacing:-0.138px;">X = 4.856</div>
<div class="t" style="left:252.50px;top:828.00px;font-size:15.6px;color:#000;letter-spacing:-0.077px;">Y = 1.27853</div>
<div class="t" style="left:496.50px;top:828.00px;font-size:15.6px;color:#000;letter-spacing:0.069px;">Value = -0.99995</div>
<div class="t" style="left:677.60px;top:105.00px;font-size:12.5px;color:#000;transform:translateY(0.20px) scaleX(1.1841);transform-origin:0 0;">Frequency Profile</div>
<div class="t" style="left:696.40px;top:416.00px;font-size:12.5px;color:#000;transform:translateY(-0.40px) scaleX(1.2528);transform-origin:0 0;">spatial [cm]</div>
<div class="t" style="left:485.80px;top:146.00px;font-size:12.5px;color:#000;transform:translateY(0.00px) scaleX(1.0810);transform-origin:0 0;">1.0</div>
<div class="t" style="left:485.80px;top:198.00px;font-size:12.5px;color:#000;transform:translateY(0.00px) scaleX(1.0810);transform-origin:0 0;">0.5</div>
<div class="t" style="left:485.80px;top:251.00px;font-size:12.5px;color:#000;transform:translateY(0.00px) scaleX(1.0810);transform-origin:0 0;">0.0</div>
<div class="t" style="left:474.20px;top:303.00px;font-size:12.5px;color:#000;transform:translateY(0.00px) scaleX(1.2314);transform-origin:0 0;">−0.5</div>
<div class="t" style="left:474.20px;top:355.00px;font-size:12.5px;color:#000;transform:translateY(0.00px) scaleX(1.2314);transform-origin:0 0;">−1.0</div>
<div class="t" style="left:545.80px;top:398.00px;font-size:12.5px;color:#000;transform:translateY(0.00px) scaleX(1.2253);transform-origin:0 0;">−10</div>
<div class="t" style="left:638.35px;top:398.00px;font-size:12.5px;color:#000;transform:translateY(0.00px) scaleX(1.2968);transform-origin:0 0;">−5</div>
<div class="t" style="left:732.60px;top:398.00px;font-size:12.5px;color:#000;transform:translateY(0.00px) scaleX(1.0643);transform-origin:0 0;">0</div>
<div class="t" style="left:821.35px;top:398.00px;font-size:12.5px;color:#000;transform:translateY(0.00px) scaleX(1.0643);transform-origin:0 0;">5</div>
<div class="t" style="left:905.90px;top:398.00px;font-size:12.5px;color:#000;transform:translateY(0.00px) scaleX(1.1362);transform-origin:0 0;">10</div>
<div class="t" style="left:671.70px;top:459.00px;font-size:12.5px;color:#000;transform:translateY(0.20px) scaleX(1.1565);transform-origin:0 0;">RF Pulse Waveform</div>
<div class="t" style="left:703.30px;top:770.00px;font-size:12.5px;color:#000;transform:translateY(-0.40px) scaleX(1.2642);transform-origin:0 0;">time [ms]</div>
<div class="t" style="left:489.80px;top:519.00px;font-size:12.5px;color:#000;transform:translateY(0.00px) scaleX(1.1362);transform-origin:0 0;">20</div>
<div class="t" style="left:489.80px;top:571.00px;font-size:12.5px;color:#000;transform:translateY(0.00px) scaleX(1.1362);transform-origin:0 0;">10</div>
<div class="t" style="left:498.20px;top:623.00px;font-size:12.5px;color:#000;transform:translateY(0.00px) scaleX(1.0643);transform-origin:0 0;">0</div>
<div class="t" style="left:479.20px;top:675.00px;font-size:12.5px;color:#000;transform:translateY(0.00px) scaleX(1.2442);transform-origin:0 0;">−10</div>
<div class="t" style="left:479.20px;top:727.00px;font-size:12.5px;color:#000;transform:translateY(0.00px) scaleX(1.2442);transform-origin:0 0;">−20</div>
<div class="t" style="left:515.50px;top:751.00px;font-size:12.5px;color:#000;transform:translateY(0.00px) scaleX(1.0643);transform-origin:0 0;">0</div>
<div class="t" style="left:569.50px;top:751.00px;font-size:12.5px;color:#000;transform:translateY(0.00px) scaleX(1.0643);transform-origin:0 0;">1</div>
<div class="t" style="left:623.50px;top:751.00px;font-size:12.5px;color:#000;transform:translateY(0.00px) scaleX(1.0643);transform-origin:0 0;">2</div>
<div class="t" style="left:677.50px;top:751.00px;font-size:12.5px;color:#000;transform:translateY(0.00px) scaleX(1.0643);transform-origin:0 0;">3</div>
<div class="t" style="left:732.50px;top:751.00px;font-size:12.5px;color:#000;transform:translateY(0.00px) scaleX(1.0643);transform-origin:0 0;">4</div>
<div class="t" style="left:786.50px;top:751.00px;font-size:12.5px;color:#000;transform:translateY(0.00px) scaleX(1.0643);transform-origin:0 0;">5</div>
<div class="t" style="left:840.50px;top:751.00px;font-size:12.5px;color:#000;transform:translateY(0.00px) scaleX(1.0643);transform-origin:0 0;">6</div>
<div class="t" style="left:895.50px;top:751.00px;font-size:12.5px;color:#000;transform:translateY(0.00px) scaleX(1.0643);transform-origin:0 0;">7</div>
<div class="t" style="left:949.50px;top:751.00px;font-size:12.5px;color:#000;transform:translateY(0.00px) scaleX(1.0643);transform-origin:0 0;">8</div>
<div class="t" style="left:458.20px;top:262.50px;font-size:12.5px;width:65.30px;margin-left:-32.65px;margin-top:-10px;transform:rotate(-90deg) scaleX(1.2175);transform-origin:50% 50%;text-align:center;">Mz [normal]</div>
<div class="t" style="left:463.00px;top:615.00px;font-size:12.5px;width:83.39px;margin-left:-41.70px;margin-top:-10px;transform:rotate(-90deg) scaleX(1.2172);transform-origin:50% 50%;text-align:center;">Magnitude [uT]</div>
</div>
</body></html>
